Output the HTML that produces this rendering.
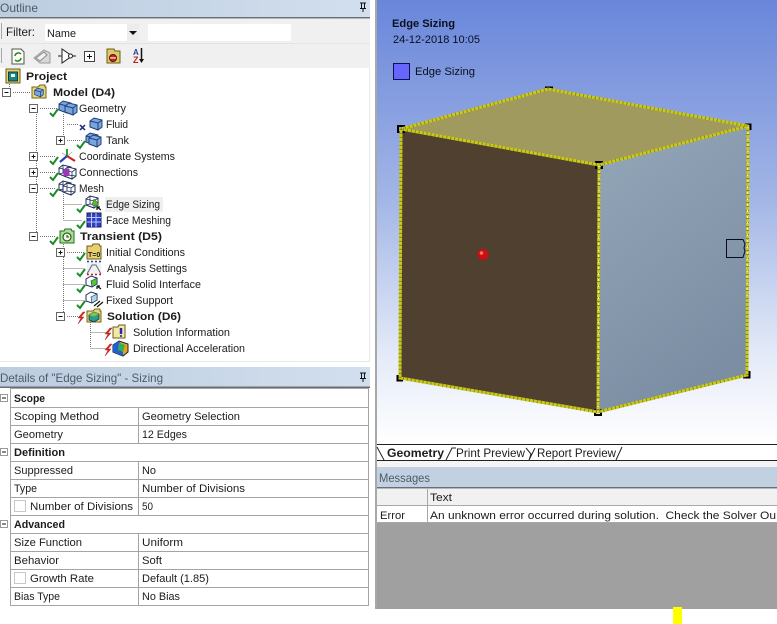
<!DOCTYPE html>
<html><head><meta charset="utf-8"><style>
html,body{margin:0;padding:0;background:#fff}
svg{display:block}
text{font-family:"Liberation Sans",sans-serif;font-size:11px;fill:#1c1c1c}
.b{font-weight:bold}
.h{font-size:12px;fill:#505a66}
</style></head><body>
<svg width="777" height="624" viewBox="0 0 777 624" xmlns="http://www.w3.org/2000/svg">
<defs>
<linearGradient id="hd" x1="0" x2="1" y1="0" y2="0"><stop offset="0" stop-color="#bccde0"/><stop offset="1" stop-color="#d2dfee"/></linearGradient>
<linearGradient id="bg" x1="0" x2="0" y1="0" y2="1"><stop offset="0" stop-color="#6986da"/><stop offset=".45" stop-color="#a3b6e6"/><stop offset=".8" stop-color="#e4eaf8"/><stop offset="1" stop-color="#ffffff"/></linearGradient>
<linearGradient id="rf" x1="0" x2="0.4" y1="0" y2="1"><stop offset="0" stop-color="#94a7b9"/><stop offset="1" stop-color="#7b8ea3"/></linearGradient>
<g id="chk"><path d="M-4 1 L-1 4 L4 -3" fill="none" stroke="#1f8a2c" stroke-width="2"/></g>
<g id="bolt"><path d="M2 -6 L-3 0 L0 0 L-3 6 L3 -1 L0 -1 L4 -6Z" fill="#e02a1c" stroke="#8a1208" stroke-width=".4"/></g>
<g id="cube"><path d="M-6 -3 L-2 -6 L6 -4 L6 3 L2 6 L-6 3Z" fill="#7ba4de" stroke="#1c3f78"/><path d="M-6 -3 L2 -1 L6 -4 M2 -1 L2 6" fill="none" stroke="#1c3f78"/></g>
<g id="wire"><path d="M-6 -3 L-2 -6 L6 -4 L6 3 L2 6 L-6 3Z" fill="#fff" stroke="#1c2c58"/><path d="M-6 -3 L2 -1 L6 -4 M2 -1 L2 6 M-2 -6 L-2 2 L6 3 M-6 3 L-2 2" fill="none" stroke="#1c2c58" stroke-width=".8"/></g>
<g id="plus"><rect x="-3.5" y="-3.5" width="8" height="8" fill="#fff" stroke="#666"/><path d="M-1.5 .5H2.5M.5 -1.5V2.5" stroke="#111"/></g>
<g id="minus"><rect x="-3.5" y="-3.5" width="8" height="8" fill="#fff" stroke="#666"/><path d="M-1.5 .5H2.5" stroke="#111"/></g>
<g id="fold"><path d="M-7 -5 H-1 L1 -7 H6 V-5 H7 V6 H-7Z" fill="#ead67e" stroke="#7a6414"/></g>
</defs>

<!-- left panel -->
<rect x="0" y="0" width="370" height="17" fill="url(#hd)"/>
<rect x="0" y="17" width="370" height="1.5" fill="#6b6f75"/>
<text class="h" x="0" y="12" textLength="38" lengthAdjust="spacingAndGlyphs">Outline</text>
<path d="M360 3H366M361.500 3V8M364.500 3V8M360 8.500H366M363 8.500V12" stroke="#111" fill="none"/>
<rect x="0" y="19" width="370" height="24" fill="#f0f0f0"/>
<rect x="0" y="43" width="370" height="1" fill="#e4e4e4"/>
<rect x="0" y="44" width="370" height="24" fill="#f0f0f0"/>
<path d="M1.500 23V39M1.500 48V63" stroke="#a8a8a8"/>
<text x="6" y="36" textLength="29" lengthAdjust="spacingAndGlyphs" style="font-size:12px">Filter:</text>
<rect x="45" y="24" width="94" height="17" fill="#fff"/>
<rect x="127" y="24" width="12" height="17" fill="#ececec"/>
<path d="M129 31H137L133 35Z" fill="#111"/>
<text x="47" y="37" textLength="29" lengthAdjust="spacingAndGlyphs">Name</text>
<rect x="148" y="24" width="143" height="17" fill="#fff"/>
<!-- toolbar icons -->
<path d="M12 49H21L24 52V64H12Z" fill="#fdfdf4" stroke="#555"/><path d="M15 56A3.500 3.500 0 0 1 21 54M21 58A3.500 3.500 0 0 1 15 60" fill="none" stroke="#1f8a2c" stroke-width="1.500"/>
<path d="M34 58L44 50L50 53V63H40Z" fill="#d8d8d8" stroke="#9a9a9a"/><path d="M36 58L44 52L47 55L40 61Z" fill="#f2f2f2" stroke="#8a8a8a"/>
<path d="M62 49V63L72 56ZM58 56H62M72 56H76" fill="#fff" stroke="#222"/><circle cx="70.500" cy="56" r="2" fill="#fff" stroke="#222"/>
<rect x="84.500" y="51.500" width="10" height="10" fill="#fff" stroke="#444"/><path d="M87 56.500H92M89.500 54V59" stroke="#111"/>
<path d="M107 49H114L115 51H120V63H107Z" fill="#dcc96a" stroke="#6e5c14"/><circle cx="113" cy="58" r="3.500" fill="#d02424" stroke="#5a0c0c"/><rect x="110" y="57.200" width="6" height="1.400" fill="#f4e0a0"/>
<text x="133" y="55" class="b" style="font-size:8px;fill:#27409a">A</text><text x="133" y="63" class="b" style="font-size:9px;fill:#c02020">Z</text>
<path d="M141.500 48V60" stroke="#111" stroke-width="1.500"/><path d="M139 59H144L141.500 63Z" fill="#111"/>

<!-- tree lines -->
<g stroke="#777" stroke-dasharray="1 1" fill="none">
<path d="M9.500 82V88M13 92.500H30M36.500 112V152M36.500 161V168M36.500 177V184M36.500 193V232M40 108.500H58M40 156.500H56M40 172.500H56M40 188.500H56M40 236.500H56M63.500 114V136M67 124.500H78M67 140.500H82M63.500 194V220M63.500 204.500H82M63.500 220.500H82M63.500 242V248M63.500 257V312M67 252.500H84M63.500 268.500H84M63.500 284.500H84M63.500 300.500H84M67 316.500H80M90.500 322V348M90.500 332.500H107M90.500 348.500H107"/>
</g>

<!-- tree icons -->
<rect x="6" y="69" width="14" height="14" fill="#e8d078" stroke="#6e5c14"/><rect x="8.500" y="72" width="9" height="9" fill="#20857f" stroke="#0d3f3c"/><rect x="11" y="74" width="4" height="3" fill="#dff"/>
<use href="#minus" x="6" y="92"/><use href="#fold" x="39" y="92"/><g transform="translate(39 92.500) scale(.72)"><use href="#cube"/></g>
<use href="#minus" x="33" y="108"/><use href="#chk" x="54" y="112"/><use href="#cube" x="65" y="107"/><use href="#cube" x="71" y="109"/>
<path d="M80 125L85 130M85 125L80 130" stroke="#1c2c78" stroke-width="1.500"/><use href="#cube" x="96" y="124"/>
<use href="#plus" x="60" y="140"/><use href="#chk" x="81" y="144"/><use href="#cube" x="92" y="139"/><use href="#cube" x="95" y="141"/>
<use href="#plus" x="33" y="156"/><use href="#chk" x="54" y="160"/><path d="M62 153L72 159M72 152L63 160" stroke="#aaa" stroke-width=".8"/><path d="M67 149V156" stroke="#2aa02a" stroke-width="2"/><path d="M67 156L60 162" stroke="#2046c0" stroke-width="2.200"/><path d="M67 156L75 161" stroke="#d02020" stroke-width="2.200"/>
<use href="#plus" x="33" y="172"/><use href="#chk" x="54" y="176"/><use href="#wire" x="65" y="171"/><use href="#wire" x="70" y="173"/><rect x="63.500" y="169" width="6" height="7" fill="#9a38b8"/>
<use href="#minus" x="33" y="188"/><use href="#chk" x="54" y="192"/><use href="#wire" x="65" y="187"/><use href="#wire" x="69" y="189"/>
<rect x="105" y="197" width="58" height="15" fill="#efefef"/>
<use href="#chk" x="81" y="208"/><use href="#wire" x="92" y="202"/><path d="M94 199L98 203V206L92 205Z" fill="#50c030" stroke="#1c5010" stroke-width=".5"/><path d="M97 207L101 210M97 207V210M97 207H100" stroke="#111" stroke-width="1.200"/>
<use href="#chk" x="81" y="224"/><rect x="87" y="213" width="14" height="14" fill="#3040c8" stroke="#16205e"/><path d="M87 217.500H101M87 222H101M91.500 213V227M96 213V227" stroke="#c0c8f0"/>
<use href="#minus" x="33" y="236"/><use href="#chk" x="54" y="240"/><path d="M60 231H64L65 229H71L72 231H74V243H60Z" fill="#a6e090" stroke="#286a20"/><circle cx="67" cy="237" r="4" fill="#eef8e0" stroke="#1c3818"/><path d="M67 235V237H69" stroke="#1c3818" fill="none"/>
<use href="#plus" x="60" y="252"/><use href="#chk" x="81" y="256"/><path d="M87 246H92L93 244H99L100 246H101V259H87Z" fill="#e8cf70" stroke="#6e5c14"/><text x="88" y="257" class="b" style="font-size:7px">T=0</text>
<use href="#chk" x="81" y="272"/><rect x="87" y="262" width="14" height="12" fill="#eef2f8"/><path d="M87 274L92 265H96L101 274" fill="none" stroke="#666"/><path d="M87 261.500H101" stroke="#2040a0" stroke-dasharray="2 2" stroke-width="1.500"/><path d="M87 274.500H101" stroke="#c02020" stroke-dasharray="2 2" stroke-width="1.500"/>
<use href="#chk" x="81" y="288"/><path d="M86 279L91 276L97 278V284L92 287L86 285Z" fill="#fff" stroke="#1c2c58"/><path d="M91 281L97 278V284L92 287Z" fill="#50c838" stroke="#1c2c58" stroke-width=".6"/><path d="M97 286L101 289M97 286V289M97 286H100" stroke="#111" stroke-width="1.200"/>
<use href="#chk" x="81" y="304"/><path d="M86 295L91 292L97 294V300L92 303L86 301Z" fill="#fff" stroke="#1c2c58"/><path d="M91 297L97 294V300L92 303Z" fill="#a8d8ec" stroke="#1c2c58" stroke-width=".6"/><path d="M94 306L100 301M97 307L103 302" stroke="#111" stroke-width="1.200"/>
<use href="#minus" x="60" y="316"/><use href="#bolt" x="81" y="318"/><use href="#fold" x="94" y="316"/><path d="M89 315L94 312L99 314V319L94 322L89 320Z" fill="#2c9a8c" stroke="#123" stroke-width=".7"/><path d="M89 315L94 316.500L99 314L94 312Z" fill="#78c850"/>
<use href="#bolt" x="108" y="334"/><path d="M113 327H118L119 325H125V338H113Z" fill="#f4e8a8" stroke="#6e5c14"/><path d="M121 328V334" stroke="#1c2cb0" stroke-width="2.500"/><path d="M120 336H122" stroke="#1c2cb0" stroke-width="1.600"/>
<use href="#bolt" x="108" y="350"/><path d="M113 345L119 341L128 344V352L123 356L113 352Z" fill="#e8a020" stroke="#123"/><path d="M113 345L119 341L123 347L123 356L113 352Z" fill="#2060d0"/><path d="M119 343L125 345L123 352L118 350Z" fill="#30b050"/>

<!-- tree text -->
<text class="b" x="26" y="80" textLength="41" lengthAdjust="spacingAndGlyphs">Project</text>
<text class="b" x="53" y="96" textLength="62" lengthAdjust="spacingAndGlyphs">Model (D4)</text>
<text x="79" y="112" textLength="47" lengthAdjust="spacingAndGlyphs">Geometry</text>
<text x="106" y="128" textLength="22" lengthAdjust="spacingAndGlyphs">Fluid</text>
<text x="106" y="144" textLength="23" lengthAdjust="spacingAndGlyphs">Tank</text>
<text x="79" y="160" textLength="96" lengthAdjust="spacingAndGlyphs">Coordinate Systems</text>
<text x="79" y="176" textLength="59" lengthAdjust="spacingAndGlyphs">Connections</text>
<text x="79" y="192" textLength="25" lengthAdjust="spacingAndGlyphs">Mesh</text>
<text x="106" y="208" textLength="54" lengthAdjust="spacingAndGlyphs">Edge Sizing</text>
<text x="106" y="224" textLength="65" lengthAdjust="spacingAndGlyphs">Face Meshing</text>
<text class="b" x="80" y="240" textLength="82" lengthAdjust="spacingAndGlyphs">Transient (D5)</text>
<text x="106" y="256" textLength="79" lengthAdjust="spacingAndGlyphs">Initial Conditions</text>
<text x="107" y="272" textLength="80" lengthAdjust="spacingAndGlyphs">Analysis Settings</text>
<text x="106" y="288" textLength="95" lengthAdjust="spacingAndGlyphs">Fluid Solid Interface</text>
<text x="106" y="304" textLength="67" lengthAdjust="spacingAndGlyphs">Fixed Support</text>
<text class="b" x="107" y="320" textLength="74" lengthAdjust="spacingAndGlyphs">Solution (D6)</text>
<text x="133" y="336" textLength="97" lengthAdjust="spacingAndGlyphs">Solution Information</text>
<text x="133" y="352" textLength="112" lengthAdjust="spacingAndGlyphs">Directional Acceleration</text>
<path d="M0 361.500H369.500V68" fill="none" stroke="#e8e8e8"/>

<!-- details -->
<rect x="0" y="367" width="370" height="20" fill="url(#hd)"/>
<rect x="0" y="386.500" width="370" height="1.500" fill="#6b6f75"/>
<text class="h" x="0" y="382" textLength="163" lengthAdjust="spacingAndGlyphs">Details of "Edge Sizing" - Sizing</text>
<path d="M360 373H366M361.500 373V378M364.500 373V378M360 378.500H366M363 378.500V382" stroke="#111" fill="none"/>
<g fill="none" stroke="#a4a4a4">
<rect x="10.500" y="388.500" width="358" height="217"/>
<path d="M10 407.500H369M10 425.500H369M10 443.500H369M10 461.500H369M10 479.500H369M10 497.500H369M10 515.500H369M10 533.500H369M10 551.500H369M10 569.500H369M10 587.500H369"/>
<path d="M138.500 407V443M138.500 461V515M138.500 533V605"/>
</g>
<g fill="#fff" stroke="#999"><rect x="0.500" y="394.500" width="7" height="7"/><rect x="0.500" y="448.500" width="7" height="7"/><rect x="0.500" y="520.500" width="7" height="7"/></g>
<path d="M2 398H6M2 452H6M2 524H6" stroke="#111"/>
<rect x="14.500" y="500.500" width="11" height="11" fill="#fff" stroke="#c8c8c8"/><rect x="14.500" y="572.500" width="11" height="11" fill="#fff" stroke="#c8c8c8"/>
<text class="b" x="14" y="402" textLength="31" lengthAdjust="spacingAndGlyphs">Scope</text>
<text x="14" y="420" textLength="85" lengthAdjust="spacingAndGlyphs">Scoping Method</text>
<text x="142" y="420" textLength="98" lengthAdjust="spacingAndGlyphs">Geometry Selection</text>
<text x="14" y="438" textLength="49" lengthAdjust="spacingAndGlyphs">Geometry</text>
<text x="142" y="438" textLength="45" lengthAdjust="spacingAndGlyphs">12 Edges</text>
<text class="b" x="14" y="456" textLength="51" lengthAdjust="spacingAndGlyphs">Definition</text>
<text x="14" y="474" textLength="59" lengthAdjust="spacingAndGlyphs">Suppressed</text>
<text x="142" y="474" textLength="14" lengthAdjust="spacingAndGlyphs">No</text>
<text x="14" y="492" textLength="23" lengthAdjust="spacingAndGlyphs">Type</text>
<text x="142" y="492" textLength="103" lengthAdjust="spacingAndGlyphs">Number of Divisions</text>
<text x="30" y="510" textLength="103" lengthAdjust="spacingAndGlyphs">Number of Divisions</text>
<text x="142" y="510" textLength="11" lengthAdjust="spacingAndGlyphs">50</text>
<text class="b" x="14" y="528" textLength="51" lengthAdjust="spacingAndGlyphs">Advanced</text>
<text x="14" y="546" textLength="68" lengthAdjust="spacingAndGlyphs">Size Function</text>
<text x="142" y="546" textLength="41" lengthAdjust="spacingAndGlyphs">Uniform</text>
<text x="14" y="564" textLength="45" lengthAdjust="spacingAndGlyphs">Behavior</text>
<text x="142" y="564" textLength="20" lengthAdjust="spacingAndGlyphs">Soft</text>
<text x="30" y="582" textLength="64" lengthAdjust="spacingAndGlyphs">Growth Rate</text>
<text x="142" y="582" textLength="67" lengthAdjust="spacingAndGlyphs">Default (1.85)</text>
<text x="14" y="600" textLength="46" lengthAdjust="spacingAndGlyphs">Bias Type</text>
<text x="142" y="600" textLength="38" lengthAdjust="spacingAndGlyphs">No Bias</text>

<!-- viewport -->
<rect x="375" y="0" width="2" height="609" fill="#a8a8a8"/>
<rect x="377" y="0" width="400" height="444" fill="url(#bg)"/>
<text class="b" x="392" y="27" textLength="63" lengthAdjust="spacingAndGlyphs" style="fill:#0a1020">Edge Sizing</text>
<text x="393" y="43" textLength="87" lengthAdjust="spacingAndGlyphs" style="fill:#0a1020">24-12-2018 10:05</text>
<rect x="393.500" y="63.500" width="16" height="16" fill="#6666ff" stroke="#10104a"/>
<text x="415" y="75" textLength="60" lengthAdjust="spacingAndGlyphs" style="fill:#0a1020">Edge Sizing</text>

<!-- cube -->
<path d="M401 129L548 89L748 126L599 165Z" fill="#a09a5e"/>
<path d="M401 129L599 165L598 412L400 378Z" fill="#4f402f"/>
<path d="M599 165L748 126L747 375L598 412Z" fill="url(#rf)"/>
<g fill="none" stroke="#000" stroke-width="2">
<rect x="398" y="126" width="6" height="6"/>
<path d="M546 89V87.500H552V89"/>
<path d="M745 124.500H750.500V130"/>
<rect x="596" y="162" width="6" height="6"/>
<path d="M397.500 375V380.500H403"/>
<path d="M595 409V415H601V409"/>
<path d="M743 377.500H749.500V371"/>
</g>
<g fill="none" stroke-linejoin="round">
<path d="M401 129L548 89L748 126L599 165L401 129M599 165L598 412L400 378L401 129M748 126L747 375L598 412" stroke="#c9c91e" stroke-width="3"/>
<path d="M401 129L548 89L748 126L599 165L401 129M599 165L598 412L400 378L401 129M748 126L747 375L598 412" stroke="#55540a" stroke-width="3" stroke-dasharray="1 3" opacity=".55"/>
<path d="M599 165L598 412M748 126L747 300" stroke="#f4f4c8" stroke-width="1" stroke-dasharray="2 4"/>
</g>
<circle cx="483" cy="254.500" r="5.500" fill="#c81010"/><circle cx="481.500" cy="253" r="1.800" fill="#ff7060"/>
<path d="M726.500 239.500H743L745 244L744 248L745 251L743 257.500H726.500Z" fill="none" stroke="#0a0a1a" stroke-width="1"/>

<!-- tabs -->
<rect x="377" y="444" width="400" height="17" fill="#fff"/>
<path d="M377 444.500H777M377 460.500H777" stroke="#222"/>
<path d="M377 447L384 460M446 460L452 448L456 448M526 448L531 454L529 460L535 448M616 460L622 447" stroke="#222" fill="none"/>
<text class="b" x="387" y="457" textLength="57" lengthAdjust="spacingAndGlyphs" style="font-size:12px">Geometry</text>
<text x="456" y="457" textLength="69" lengthAdjust="spacingAndGlyphs" style="font-size:12px">Print Preview</text>
<text x="537" y="457" textLength="79" lengthAdjust="spacingAndGlyphs" style="font-size:12px">Report Preview</text>

<!-- messages -->
<rect x="377" y="461" width="400" height="6" fill="#f4f4f4"/>
<rect x="377" y="467" width="400" height="20" fill="#c2d1e2"/>
<rect x="377" y="487" width="400" height="1.500" fill="#6b6f75"/>
<text class="h" x="379" y="482" textLength="51" lengthAdjust="spacingAndGlyphs">Messages</text>
<rect x="377" y="489" width="400" height="17" fill="#f1f1f1"/>
<rect x="377" y="506" width="400" height="17" fill="#fff"/>
<rect x="377" y="523" width="400" height="86" fill="#a0a0a0"/>
<path d="M377 505.500H777M377 522.500H777" stroke="#a8a8a8"/>
<path d="M427.500 489V523" stroke="#a8a8a8"/>
<text x="430" y="501" textLength="22" lengthAdjust="spacingAndGlyphs">Text</text>
<text x="380" y="519" textLength="25" lengthAdjust="spacingAndGlyphs">Error</text>
<text x="430" y="519" textLength="346" lengthAdjust="spacingAndGlyphs" xml:space="preserve">An unknown error occurred during solution.  Check the Solver Ou</text>
<rect x="673" y="607" width="9" height="17" fill="#ffff00"/>
</svg>
</body></html>
